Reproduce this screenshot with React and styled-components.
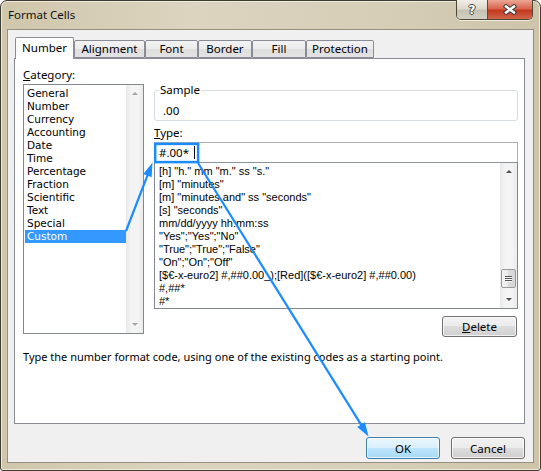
import styled, { createGlobalStyle } from "styled-components";

const GlobalStyle = createGlobalStyle`
  html,
  body {
    margin: 0;
    padding: 0;
    background: #ffffff;
  }

  body {
    font-family: "Noto Sans", "Open Sans", sans-serif;
    font-size: 11px;
    color: #000;
  }

  * {
    box-sizing: border-box;
  }
`;

const Window = styled.div`
  position: relative;
  width: 541px;
  height: 471px;
  display: flex;
  flex-direction: column;
  padding: 0 6px 7px;
  border: 1px solid #3e3b33;
  border-radius: 7px 7px 3px 3px;
  background: linear-gradient(to right, #cfc6ab, #dcd4bf 35%, #d6ceb7 70%, #cdc4a9);
  box-shadow: inset 0 0 0 1px #efeadc;
`;

const TitleBar = styled.div`
  height: 28px;
  display: flex;
  justify-content: space-between;
  align-items: flex-start;
`;

const Title = styled.div`
  padding: 7px 0 0 1px;
  font-size: 11.5px;
  line-height: 14px;
  color: #111;
`;

const CaptionButtons = styled.div`
  display: flex;
  margin: -1px 1px 0 0;
  height: 20px;
  border: 1px solid #4b4838;
  border-top: none;
  border-radius: 0 0 5px 5px;
  overflow: hidden;
  box-shadow: 0 1px 0 #efeadc;
`;

const CaptionButton = styled.div`
  width: ${({ $w }) => $w}px;
  display: flex;
  align-items: center;
  justify-content: center;
  background: ${({ $close }) =>
    $close
      ? "linear-gradient(#eba796, #d8654c 45%, #c4391f 55%, #d0654a)"
      : "linear-gradient(#f1eee7, #dcd8cc 45%, #c7c2b3 55%, #d3cfc2)"};
  border-left: ${({ $close }) => ($close ? "1px solid #5a4a40" : "none")};
`;

const HelpGlyph = styled.span`
  font-family: "DejaVu Sans", sans-serif;
  font-weight: bold;
  font-size: 12px;
  line-height: 12px;
  color: #fff;
  text-shadow: 1px 0 0 #454545, -1px 0 0 #454545, 0 1px 0 #454545,
    0 -1px 0 #454545;
`;

const Client = styled.div`
  flex: 1;
  display: flex;
  flex-direction: column;
  background: #f0f0f0;
  border: 1px solid #958f7d;
  padding: 7px 8px 3px 6px;
`;

const TabRow = styled.div`
  height: 21px;
  display: flex;
  align-items: flex-end;
  padding-left: 1px;
  position: relative;
  z-index: 1;
`;

const Tab = styled.div`
  width: ${({ $w }) => $w}px;
  height: ${({ $active }) => ($active ? 22 : 18)}px;
  margin-bottom: ${({ $active }) => ($active ? -1 : 0)}px;
  display: flex;
  align-items: center;
  justify-content: center;
  padding-bottom: ${({ $active }) => ($active ? 1 : 0)}px;
  border: 1px solid #898c95;
  border-bottom: ${({ $active }) => ($active ? "none" : "1px solid #898c95")};
  border-radius: 2px 2px 0 0;
  background: ${({ $active }) =>
    $active ? "#ffffff" : "linear-gradient(#f3f3f3, #ebebeb 50%, #dedede 50%, #e3e3e3)"};
  font-size: 11.5px;
  line-height: 14px;
  white-space: nowrap;
`;

const Panel = styled.div`
  height: 366px;
  display: flex;
  flex-direction: column;
  background: #ffffff;
  border: 1px solid #898c95;
  padding: 9px 6px 0 8px;
`;

const Columns = styled.div`
  display: flex;
  gap: 10px;
`;

const LeftColumn = styled.div`
  width: 121px;
  display: flex;
  flex-direction: column;
`;

const RightColumn = styled.div`
  width: 364px;
  display: flex;
  flex-direction: column;
`;

const FieldLabel = styled.div`
  font-size: 11.5px;
  line-height: 14px;
  margin: ${({ $top }) => $top || 0}px 0 2px;
`;

const ListBox = styled.div`
  height: ${({ $h }) => $h}px;
  display: flex;
  background: #ffffff;
  border: 1px solid #828790;
  border-top-color: ${({ $joined }) => ($joined ? "#8e929a" : "#828790")};
`;

const ListItems = styled.div`
  flex: 1;
  min-width: 0;
  overflow: hidden;
  padding: 2px 0 0 ${({ $pad }) => $pad}px;
  font-family: ${({ $codes }) =>
    $codes ? '"Liberation Sans", Arial, sans-serif' : '"DejaVu Sans", "Noto Sans", sans-serif'};
  font-size: ${({ $codes }) => ($codes ? "11px" : "10.5px")};
`;

const ListItem = styled.div`
  height: 13px;
  line-height: 13px;
  padding-left: 2px;
  white-space: nowrap;
  background: ${({ $selected }) => ($selected ? "#3399ff" : "transparent")};
  color: ${({ $selected }) => ($selected ? "#ffffff" : "#000000")};
`;

const ScrollBar = styled.div`
  width: 17px;
  display: flex;
  flex-direction: column;
  background: linear-gradient(to right, #e9e9e9, #f4f4f4 30%, #f4f4f4 70%, #ebebeb);
`;

const ScrollArrow = styled.div`
  height: 17px;
  display: flex;
  align-items: center;
  justify-content: center;

  &::before {
    content: "";
    border-left: 3.5px solid transparent;
    border-right: 3.5px solid transparent;
    ${({ $down, $color }) =>
      $down
        ? `border-top: 3px solid ${$color};`
        : `border-bottom: 3px solid ${$color};`}
  }
`;

const ScrollTrack = styled.div`
  flex: 1;
  display: flex;
  flex-direction: column;
  justify-content: flex-end;
  padding: 0 1px 3px;
`;

const ScrollThumb = styled.div`
  height: 19px;
  display: flex;
  flex-direction: column;
  align-items: center;
  justify-content: center;
  gap: 1px;
  border: 1px solid #9a9a9a;
  border-radius: 2px;
  background: linear-gradient(to right, #f3f3f3, #e9e9e9 50%, #dcdcdc 50%, #d6d6d6);

  span {
    width: 7px;
    height: 1px;
    background: #555;
    box-shadow: 0 1px 0 #f8f8f8;
  }
`;

const SampleGroup = styled.fieldset`
  margin: 15px 0 0;
  padding: 7px 8px 2px;
  border: 1px solid #d5dce3;
  border-radius: 3px;
  min-width: 0;
  font-size: 11.5px;

  legend {
    margin-left: -4px;
    padding: 0 1px;
    line-height: 14px;
  }
`;

const SampleValue = styled.div`
  line-height: 14px;
`;

const TypeInput = styled.div`
  height: 20px;
  display: flex;
  align-items: center;
  padding-left: 4px;
  border: 1px solid #abadb3;
  border-bottom: none;
  font-size: 11.5px;
  line-height: 14px;
`;

const Caret = styled.span`
  width: 1px;
  height: 13px;
  margin-left: 5px;
  background: #000;
`;

const Button = styled.button`
  width: ${({ $w }) => $w}px;
  height: ${({ $h }) => $h || 22}px;
  padding: 0;
  font-family: inherit;
  font-size: 11.5px;
  color: #000;
  border: 1px solid ${({ $default }) => ($default ? "#3c7fb1" : "#707070")};
  border-radius: 3px;
  background: ${({ $default }) =>
    $default
      ? "linear-gradient(#eaf6fd, #d9f0fc 50%, #bee6fd 50%, #a7d9f5)"
      : "linear-gradient(#f2f2f2, #ebebeb 50%, #dddddd 50%, #cfcfcf)"};
  box-shadow: inset 0 0 0 1px rgba(255, 255, 255, 0.7);
`;

const DeleteRow = styled.div`
  display: flex;
  justify-content: flex-end;
  margin: 7px 1px 0 0;
`;

const HelpText = styled.div`
  margin-top: 13px;
  line-height: 14px;
  color: #000;
`;

const Footer = styled.div`
  display: flex;
  justify-content: flex-end;
  gap: 11px;
  margin-top: 13px;
`;

const Annotations = styled.svg`
  position: absolute;
  top: -1px;
  left: -1px;
  pointer-events: none;
  overflow: visible;
`;

const TABS = [
  { label: "Number", w: 59, active: true },
  { label: "Alignment", w: 71 },
  { label: "Font", w: 53 },
  { label: "Border", w: 54 },
  { label: "Fill", w: 54 },
  { label: "Protection", w: 68 },
];

const CATEGORIES = [
  "General",
  "Number",
  "Currency",
  "Accounting",
  "Date",
  "Time",
  "Percentage",
  "Fraction",
  "Scientific",
  "Text",
  "Special",
  "Custom",
];

const FORMATS = [
  '[h] "h." mm "m." ss "s."',
  '[m] "minutes"',
  '[m] "minutes and" ss "seconds"',
  '[s] "seconds"',
  "mm/dd/yyyy hh:mm:ss",
  '"Yes";"Yes";"No"',
  '"True";"True";"False"',
  '"On";"On";"Off"',
  "[$€-x-euro2] #,##0.00_);[Red]([$€-x-euro2] #,##0.00)",
  "#,##*",
  "#*",
];

const ARROWS = [
  { from: [126, 231], to: [152.5, 162.5] },
  { from: [198, 163], to: [368.5, 436.5] },
];

const BLUE = "#1a8cff";

// tip of the arrow plus two base corners
function arrowParts([x1, y1], [x2, y2], len = 14, half = 4.5) {
  const d = Math.hypot(x2 - x1, y2 - y1);
  const ux = (x2 - x1) / d;
  const uy = (y2 - y1) / d;
  const bx = x2 - ux * len;
  const by = y2 - uy * len;
  const head = `${x2},${y2} ${bx - uy * half},${by + ux * half} ${bx + uy * half},${by - ux * half}`;
  return { head, end: [bx + ux * 2, by + uy * 2] };
}

const App = () => {
  return (
    <>
      <GlobalStyle />
      <Window>
        <TitleBar>
          <Title>Format Cells</Title>
          <CaptionButtons>
            <CaptionButton $w={30}>
              <HelpGlyph>?</HelpGlyph>
            </CaptionButton>
            <CaptionButton $w={45} $close>
              <svg width="14" height="11" viewBox="0 0 14 11">
                <path
                  d="M3 2.5 L11 8.5 M11 2.5 L3 8.5"
                  stroke="#3d3d3d"
                  strokeWidth="4.4"
                  strokeLinecap="square"
                />
                <path
                  d="M3 2.5 L11 8.5 M11 2.5 L3 8.5"
                  stroke="#ffffff"
                  strokeWidth="2.4"
                  strokeLinecap="square"
                />
              </svg>
            </CaptionButton>
          </CaptionButtons>
        </TitleBar>

        <Client>
          <TabRow>
            {TABS.map((t) => (
              <Tab key={t.label} $w={t.w} $active={t.active}>
                {t.label}
              </Tab>
            ))}
          </TabRow>

          <Panel>
            <Columns>
              <LeftColumn>
                <FieldLabel>
                  <u>C</u>ategory:
                </FieldLabel>
                <ListBox $h={250}>
                  <ListItems $pad={1}>
                    {CATEGORIES.map((c) => (
                      <ListItem key={c} $selected={c === "Custom"}>
                        {c}
                      </ListItem>
                    ))}
                  </ListItems>
                  <ScrollBar>
                    <ScrollArrow $color="#a3a3a3" />
                    <ScrollTrack />
                    <ScrollArrow $down $color="#a3a3a3" />
                  </ScrollBar>
                </ListBox>
              </LeftColumn>

              <RightColumn>
                <SampleGroup>
                  <legend>Sample</legend>
                  <SampleValue>.00</SampleValue>
                </SampleGroup>

                <FieldLabel $top={5}>
                  <u>T</u>ype:
                </FieldLabel>
                <TypeInput>
                  #.00*
                  <Caret />
                </TypeInput>
                <ListBox $h={147} $joined>
                  <ListItems $pad={2} $codes>
                    {FORMATS.map((f) => (
                      <ListItem key={f}>{f}</ListItem>
                    ))}
                  </ListItems>
                  <ScrollBar>
                    <ScrollArrow $color="#505050" />
                    <ScrollTrack>
                      <ScrollThumb>
                        <span />
                        <span />
                        <span />
                      </ScrollThumb>
                    </ScrollTrack>
                    <ScrollArrow $down $color="#505050" />
                  </ScrollBar>
                </ListBox>

                <DeleteRow>
                  <Button $w={75} $h={21}>
                    <u>D</u>elete
                  </Button>
                </DeleteRow>
              </RightColumn>
            </Columns>

            <HelpText>
              Type the number format code, using one of the existing codes as a
              starting point.
            </HelpText>
          </Panel>

          <Footer>
            <Button $w={74} $default>
              OK
            </Button>
            <Button $w={74}>Cancel</Button>
          </Footer>
        </Client>

        <Annotations width="541" height="471" viewBox="0 0 541 471">
          <rect
            x="155.2"
            y="143.9"
            width="42.9"
            height="18.2"
            fill="none"
            stroke={BLUE}
            strokeWidth="2.5"
          />
          {ARROWS.map(({ from, to }) => {
            const { head, end } = arrowParts(from, to);
            return (
              <g key={from.join()}>
                <line
                  x1={from[0]}
                  y1={from[1]}
                  x2={end[0]}
                  y2={end[1]}
                  stroke={BLUE}
                  strokeWidth="2.2"
                />
                <polygon points={head} fill={BLUE} />
              </g>
            );
          })}
        </Annotations>
      </Window>
    </>
  );
};

export default App;
